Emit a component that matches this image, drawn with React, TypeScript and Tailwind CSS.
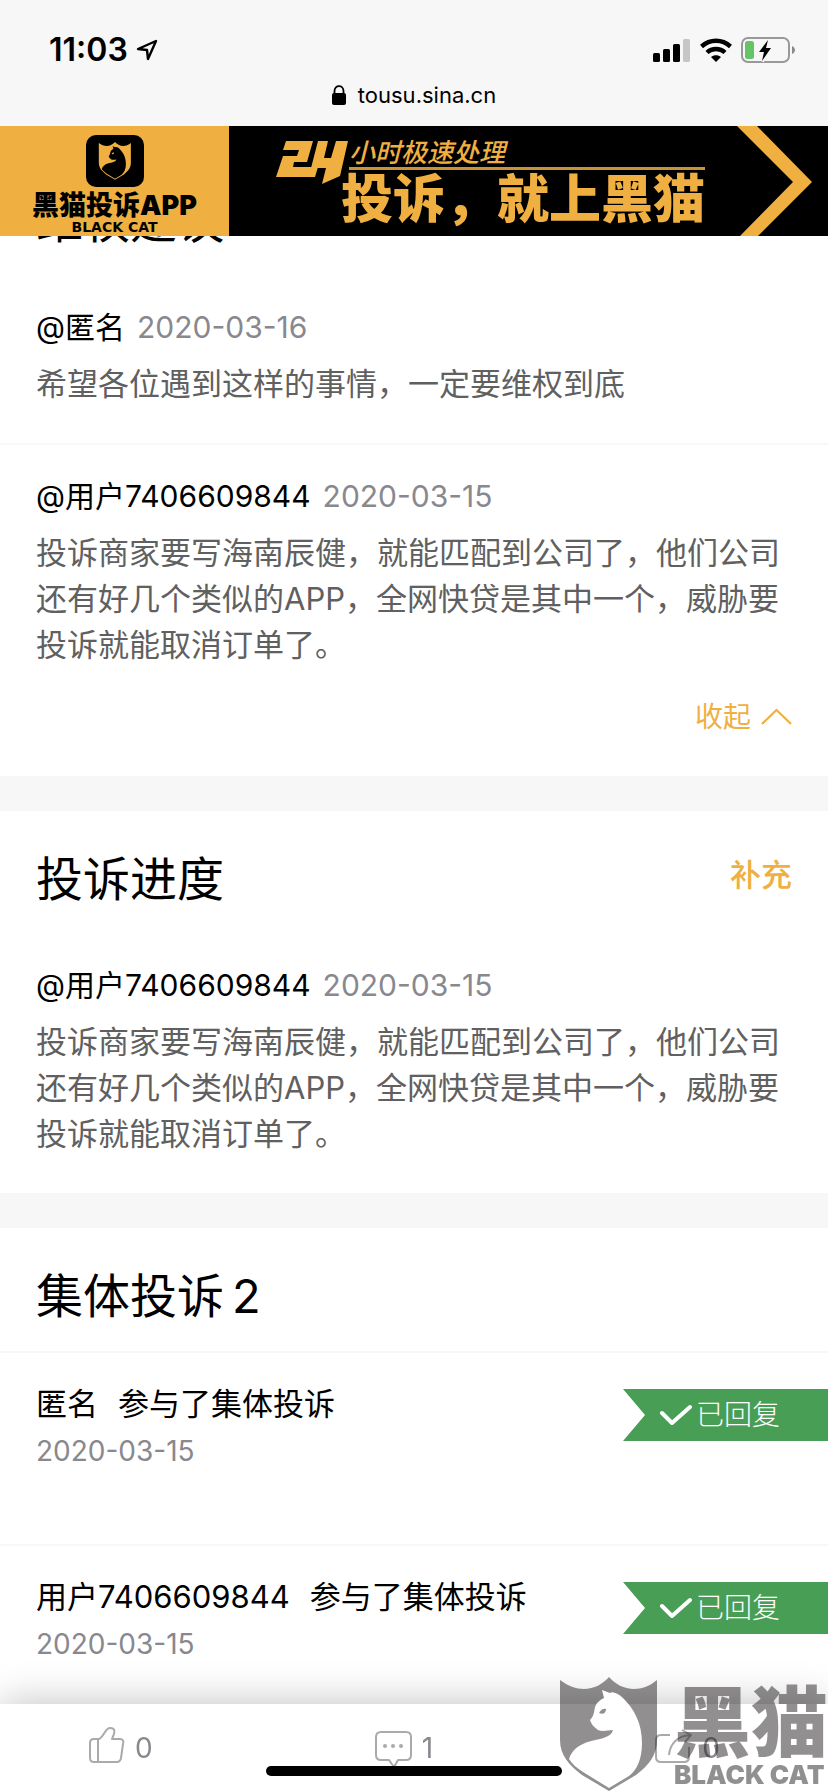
import { clsx } from "clsx";

const COMPLAINT =
    "投诉商家要写海南辰健，就能匹配到公司了，他们公司还有好几个类似的APP，全网快贷是其中一个，威胁要投诉就能取消订单了。";

const joined = [
    { name: "匿名", date: "2020-03-15" },
    { name: "用户7406609844", date: "2020-03-15" },
];

function CatShield({ className, cat }: { className: string; cat: string }) {
    return (
        <svg viewBox="0 0 98 115" className={className} aria-hidden="true">
            <path
                fill="currentColor"
                d="M0 3C8 9 16 12 24 12C34 12 43 7 49 0C55 7 64 12 74 12C82 12 90 9 97 3V63C97 78 89 88 76 98L49 114L22 98C9 88 0 78 0 63Z"
            />
            <path
                className={cat}
                d="M42 13L50 16C52 14 58 16 63 21C74 32 82 46 82 66C82 82 77 93 69 99L49 111L23 95C17 91 12 87 9 82C12 73 18 69 25 66C35 62 51 62 53 53C48 53 43 55 38 53C34 50 31 47 30 43C34 39 34 35 35 30C37 25 40 23 44 21Z"
            />
            <path fill="currentColor" d="M39 36C41 32 44 31 46 32C46 36 43 38 39 36Z" />
        </svg>
    );
}

function StatusBar() {
    return (
        <div className="h-[126px] bg-[#f7f7f7] text-black">
            <div className="flex h-[74px] items-center justify-between pt-[25px] pr-[33px] pl-[49px]">
                <div className="flex items-center gap-2">
                    <span className="text-[32px] leading-9 font-semibold">11:03</span>
                    <svg width="22" height="22" viewBox="0 0 22 22" fill="none" aria-hidden="true">
                        <path d="M2 10L20 2L12 20L11 11Z" stroke="black" strokeWidth="2.4" strokeLinejoin="round" />
                    </svg>
                </div>
                <div className="flex items-center gap-[9px]">
                    <svg width="38" height="24" viewBox="0 0 38 24" aria-hidden="true">
                        <rect x="0" y="15" width="7" height="9" rx="1.5" />
                        <rect x="10" y="11" width="7" height="13" rx="1.5" />
                        <rect x="20" y="6" width="7" height="18" rx="1.5" />
                        <rect x="30" y="1" width="7" height="23" rx="1.5" fill="#c6c6c6" />
                    </svg>
                    <svg width="32" height="24" viewBox="0 0 32 24" fill="none" stroke="black" strokeWidth="4.4" aria-hidden="true">
                        <path d="M1.5 8.5C10 0.8 22 0.8 30.5 8.5" />
                        <path d="M7 14.5C12 9.8 20 9.8 25 14.5" />
                        <path d="M11 19C14 16.5 18 16.5 21 19L16 24Z" fill="black" stroke="none" />
                    </svg>
                    <svg width="54" height="26" viewBox="0 0 54 26" fill="none" aria-hidden="true">
                        <rect x="1" y="1" width="47" height="24" rx="6" stroke="#999999" strokeWidth="2" />
                        <rect x="4" y="4" width="9" height="18" rx="2.5" fill="#65c466" />
                        <path d="M51 9C55 11 55 15 51 17Z" fill="#8a8a8a" />
                        <path d="M27 3L18 15H23L21 24L30 11H25Z" fill="black" stroke="#f7f7f7" strokeWidth="4" paintOrder="stroke" />
                    </svg>
                </div>
            </div>
            <div className="flex items-center justify-center gap-3 pt-[5px]">
                <svg width="14" height="20" viewBox="0 0 14 20" fill="none" aria-hidden="true">
                    <rect y="8" width="14" height="12" rx="2" fill="black" />
                    <path d="M2.5 9V6C2.5 -0.5 11.5 -0.5 11.5 6V9" stroke="black" strokeWidth="1.8" />
                </svg>
                <span className="text-[22px] leading-8">tousu.sina.cn</span>
            </div>
        </div>
    );
}

function AppBanner() {
    return (
        <a href="#app" className="flex h-[110px] overflow-hidden bg-black text-[#efb041]">
            <div className="flex w-[229px] shrink-0 flex-col items-center bg-[#efb041] pt-[9px] text-black">
                <div className="flex h-[52px] w-[58px] items-center justify-center rounded-[10px] bg-black text-[#efb041]">
                    <CatShield className="h-[38px] w-[38px]" cat="fill-black" />
                </div>
                <div className="mt-[5px] text-[27px] leading-7 font-black">黑猫投诉APP</div>
                <div className="font-['DejaVu_Sans',sans-serif] text-[14px] leading-[14px] font-bold">BLACK CAT</div>
            </div>
            <div className="flex flex-1 justify-between pl-[46px]">
                <div>
                    <div className="flex h-[44px]">
                        <svg width="74" height="58" viewBox="0 0 74 58" fill="currentColor" className="shrink-0" role="img" aria-label="24">
                            <path d="M11 15H38L32 36H19L18 41H43L40 51H1L8 30H22L24 24H8ZM43 15H53L49 32H56L61 15H73L65 50L47 58L51 42H36Z" />
                        </svg>
                        <div className="flex-1 border-b-[3px] border-[#c99336] pt-[11px]">
                            <div className="text-[26px] leading-8 font-medium italic">小时极速处理</div>
                        </div>
                    </div>
                    <div className="pl-[66px] text-[52px] leading-[60px] font-black">投诉，就上黑猫</div>
                </div>
                <svg width="91" height="110" viewBox="0 0 91 110" fill="currentColor" className="shrink-0" aria-hidden="true">
                    <path d="M0 0H20L75 56L21 110H3L56 56Z" />
                </svg>
            </div>
        </a>
    );
}

function Comment({ name, date, text }: { name: string; date: string; text: string }) {
    return (
        <article className="px-9">
            <div className="flex gap-3 text-[30px] leading-[42px]">
                <span className="text-black">@{name}</span>
                <time className="text-[#88888e]">{date}</time>
            </div>
            <p className="mt-[13px] text-[31px] leading-[46px] text-[#606060]">{text}</p>
        </article>
    );
}

function SectionTitle({ title, count }: { title: string; count?: number }) {
    return (
        <h2 className="flex gap-2 text-[47px] leading-[66px] text-black">
            {title}
            {count !== undefined && <span>{count}</span>}
        </h2>
    );
}

function RepliedRibbon() {
    return (
        <div className="mt-[6px] flex h-[52px] w-[205px] shrink-0 items-center gap-1 bg-[#499e56] pl-9 text-white [clip-path:polygon(0_0,100%_0,100%_100%,0_100%,22px_50%)]">
            <svg width="33" height="24" viewBox="0 0 33 24" fill="none" aria-hidden="true">
                <path d="M3 10L13 20L31 4" stroke="white" strokeWidth="4" strokeLinecap="round" strokeLinejoin="round" />
            </svg>
            <span className="text-[28px] leading-9 font-light">已回复</span>
        </div>
    );
}

function BottomBar() {
    const item = "flex items-start gap-2.5 text-[28px] leading-9 text-[#88888e]";
    return (
        <nav className="fixed inset-x-0 bottom-0 z-10 h-[88px] bg-white pt-[22px] pr-[108px] pl-[88px] shadow-[0_0_40px_rgba(0,0,0,0.26)]">
            <div className="flex justify-between">
                <button type="button" aria-label="点赞 0" className={item}>
                    <svg width="37" height="40" viewBox="0 0 37 40" fill="none" stroke="#aaaaaa" strokeWidth="2" strokeLinejoin="round" aria-hidden="true">
                        <path d="M11 13C16 11 17 2 22 2C29 2 26 8 24 13H32C35 13 36 15 35 18L33 32C33 34 31 36 29 36H6C3 36 2 34 2 32V17C2 14 4 13 6 13ZM10 13V36" />
                    </svg>
                    <span className="pt-1">0</span>
                </button>
                <button type="button" aria-label="评论 1" className={item}>
                    <svg width="37" height="42" viewBox="0 0 37 42" fill="none" stroke="#aaaaaa" strokeWidth="2" strokeLinejoin="round" aria-hidden="true">
                        <path d="M6 6H31C34 6 36 8 36 11V29C36 32 34 34 31 34H23L19 41L14 34H6C3 34 1 32 1 29V11C1 8 3 6 6 6Z" />
                        <g fill="#aaaaaa" stroke="none">
                            <circle cx="10" cy="20" r="2" />
                            <circle cx="18" cy="20" r="2" />
                            <circle cx="26" cy="20" r="2" />
                        </g>
                    </svg>
                    <span className="pt-1">1</span>
                </button>
                <button type="button" aria-label="分享 0" className={item}>
                    <svg width="37" height="40" viewBox="0 0 37 40" fill="none" stroke="#aaaaaa" strokeWidth="2" strokeLinejoin="round" aria-hidden="true">
                        <path d="M15 9H6C3 9 1 11 1 14V31C1 34 3 36 6 36H29C32 36 34 34 34 31V21M14 29C15 18 22 10 35 9M27 4L36 9L30 16" />
                    </svg>
                    <span className="pt-1">0</span>
                </button>
            </div>
            <div className="absolute bottom-4 left-1/2 h-2.5 w-[296px] -translate-x-1/2 rounded-full bg-black" />
        </nav>
    );
}

function Watermark() {
    return (
        <div className="pointer-events-none fixed right-0 bottom-0 z-20 flex gap-4 text-[#231f20]/50">
            <CatShield className="h-[115px] w-[98px]" cat="fill-white" />
            <div className="pt-2">
                <div className="text-[77px] leading-[76px] font-black">黑猫</div>
                <div className="text-[26px] leading-7 font-black">BLACK CAT</div>
            </div>
        </div>
    );
}

export default function App() {
    return (
        <div className="bg-white pb-[88px] font-['Inter','Noto_Sans_CJK_SC',sans-serif]">
            <header className="fixed inset-x-0 top-0 z-10">
                <StatusBar />
                <AppBanner />
            </header>

            <main className="pt-[153px]">
                <section className="pt-[35px]">
                    <div className="px-9 pb-[52px]">
                        <SectionTitle title="维权建议" />
                    </div>
                    <Comment name="匿名" date="2020-03-16" text="希望各位遇到这样的事情，一定要维权到底" />
                    <div className="mt-9 mb-[30px] h-0.5 bg-[#f7f7f7]" />
                    <Comment name="用户7406609844" date="2020-03-15" text={COMPLAINT} />
                    <div className="flex justify-end px-9 pt-7 pb-[38px]">
                        <button type="button" className="flex items-center gap-2.5 text-[28px] leading-[42px] text-[#efb041]">
                            收起
                            <svg width="31" height="18" viewBox="0 0 31 18" fill="none" aria-hidden="true">
                                <path d="M1 16L15.5 2L30 16" stroke="currentColor" strokeWidth="2.2" />
                            </svg>
                        </button>
                    </div>
                </section>

                <div className="h-[35px] bg-[#f7f7f7]" />

                <section className="pt-[35px] pb-9">
                    <div className="flex items-start justify-between px-9 pb-[52px]">
                        <SectionTitle title="投诉进度" />
                        <button type="button" className="text-[31px] leading-[58px] font-medium text-[#efb041]">
                            补充
                        </button>
                    </div>
                    <Comment name="用户7406609844" date="2020-03-15" text={COMPLAINT} />
                </section>

                <div className="h-[35px] bg-[#f7f7f7]" />

                <section className="pt-[35px]">
                    <div className="px-9 pb-[22px]">
                        <SectionTitle title="集体投诉" count={2} />
                    </div>
                    <ul>
                        {joined.map((row, i) => (
                            <li
                                key={row.name}
                                className={clsx(
                                    "flex justify-between border-t-2 border-[#f7f7f7] pt-[30px] pl-9",
                                    i < joined.length - 1 && "pb-[75px]"
                                )}
                            >
                                <div>
                                    <div className="flex gap-5 text-[31px] leading-[42px] text-black">
                                        <span>{row.name}</span>
                                        <span>参与了集体投诉</span>
                                    </div>
                                    <time className="mt-2 block text-[28px] leading-9 text-[#88888e]">{row.date}</time>
                                </div>
                                <RepliedRibbon />
                            </li>
                        ))}
                    </ul>
                </section>
            </main>

            <BottomBar />
            <Watermark />
        </div>
    );
}
